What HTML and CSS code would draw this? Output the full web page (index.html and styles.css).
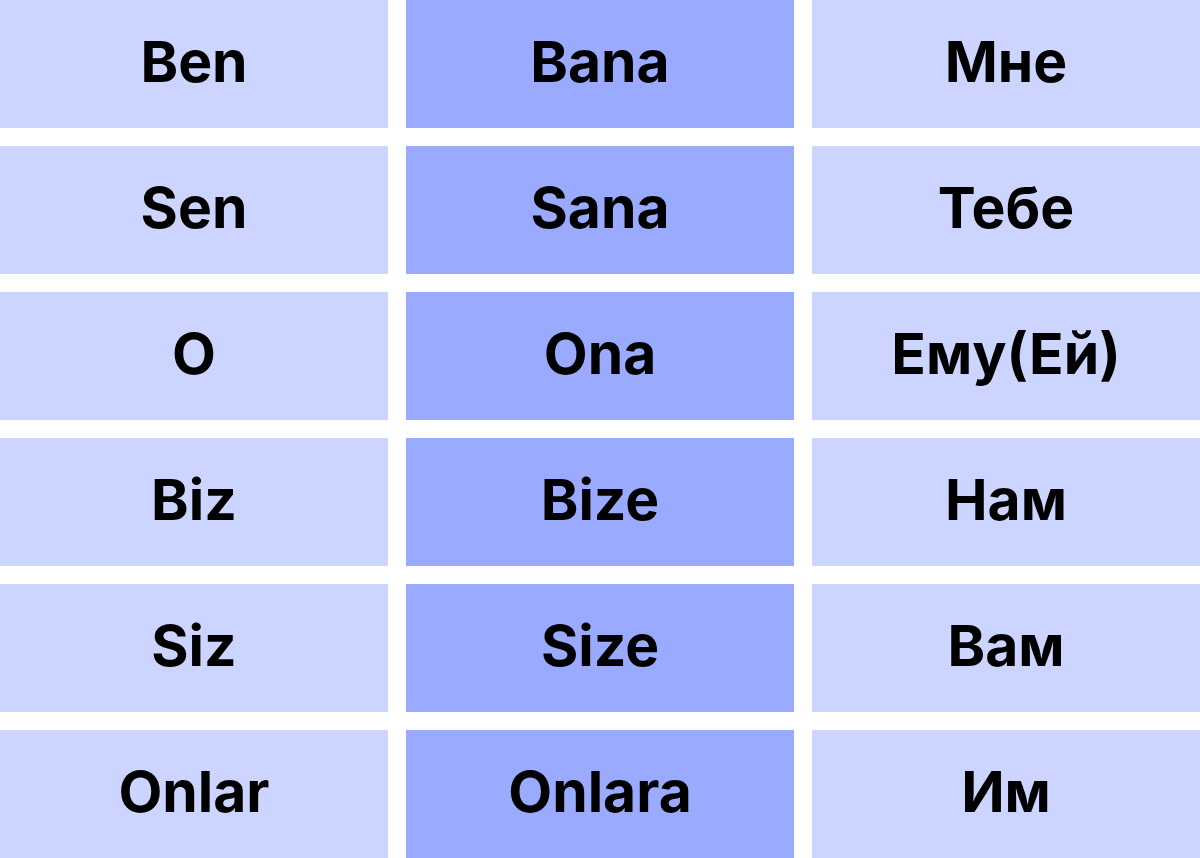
FILE: index.html
```html
<!DOCTYPE html>
<html>
<head>
<meta charset="utf-8">
<link rel="stylesheet" href="styles.css">
</head>
<body>
<div class="table">
  <div class="cell light">Ben</div><div class="cell mid">Bana</div><div class="cell light">Мне</div>
  <div class="cell light">Sen</div><div class="cell mid">Sana</div><div class="cell light">Тебе</div>
  <div class="cell light">O</div><div class="cell mid">Ona</div><div class="cell light">Ему(Ей)</div>
  <div class="cell light">Biz</div><div class="cell mid">Bize</div><div class="cell light">Нам</div>
  <div class="cell light">Siz</div><div class="cell mid">Size</div><div class="cell light">Вам</div>
  <div class="cell light">Onlar</div><div class="cell mid">Onlara</div><div class="cell light">Им</div>
</div>
</body>
</html>
```
FILE: styles.css
```css
html, body {
  margin: 0;
  padding: 0;
  background: #ffffff;
}
.table {
  width: 1200px;
  height: 858px;
  display: grid;
  grid-template-columns: repeat(3, 388px);
  grid-template-rows: repeat(6, 128px);
  gap: 18px;
}
.cell {
  display: flex;
  align-items: center;
  justify-content: center;
  padding-bottom: 6px;
  box-sizing: border-box;
  font-family: Inter, "Noto Sans", sans-serif;
  font-weight: 700;
  font-size: 57px;
  color: #000;
}
.light { background: #ccd5ff; }
.mid { background: #99aaff; }
```
